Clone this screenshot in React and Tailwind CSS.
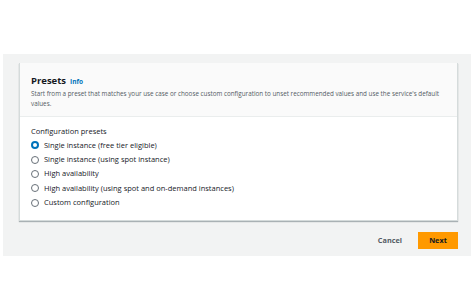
import React, { useState } from 'react';

const OPTIONS = [
  'Single instance (free tier eligible)',
  'Single instance (using spot instance)',
  'High availability',
  'High availability (using spot and on-demand instances)',
  'Custom configuration'
];

const Radio = ({ checked }) =>
  checked ? (
    <span className="inline-block w-[8px] h-[8px] rounded-full border-[2.5px] border-[#0073bb] bg-white shrink-0" />
  ) : (
    <span className="inline-block w-[8px] h-[8px] rounded-full border border-[#687078] bg-white shrink-0" />
  );

export default function App() {
  const [selected, setSelected] = useState(0);

  return (
    <div className="w-[474px] h-[298px] bg-white font-['Open_Sans',sans-serif] text-[#16191f] pt-[54px]">
      <div className="mx-[3px] h-[202px] bg-[#f2f3f3] pt-[9px] pl-[16px] pr-[13px]">
        {/* Card */}
        <div className="bg-white border-x border-b border-[#d5dbdb] shadow-[0_1px_1px_rgba(0,28,36,0.3)]">
          <div className="bg-[#fafafa] h-[54px] px-[11px] pt-[11px] border-b border-[#eaeded]">
            <div className="flex items-baseline gap-[4px]">
              <h2 className="text-[9.5px] leading-[14px] font-bold">Presets</h2>
              <span className="text-[6.5px] font-bold text-[#0073bb]">Info</span>
            </div>
            <p className="mt-[1px] text-[6.3px] leading-[10px] text-[#545b64]">
              Start from a preset that matches your use case or choose custom configuration to unset
              recommended values and use the service's default values.
            </p>
          </div>
          <div className="px-[11px] pt-[8px] h-[103px]">
            <div className="text-[7.5px] leading-[12px] mb-[1px]">Configuration presets</div>
            <div className="flex flex-col">
              {OPTIONS.map((label, i) => (
                <label
                  key={label}
                  onClick={() => setSelected(i)}
                  className="flex items-center gap-[5px] h-[14.4px] text-[7.5px] cursor-pointer"
                >
                  <Radio checked={selected === i} />
                  <span>{label}</span>
                </label>
              ))}
            </div>
          </div>
        </div>

        {/* Actions */}
        <div className="flex justify-end items-center gap-[16px] mt-[11px]">
          <button className="text-[7.3px] font-bold text-[#545b64]">Cancel</button>
          <button className="w-[40px] h-[17px] bg-[#ff9900] text-[7.3px] font-bold text-[#16191f]">
            Next
          </button>
        </div>
      </div>
    </div>
  );
}
